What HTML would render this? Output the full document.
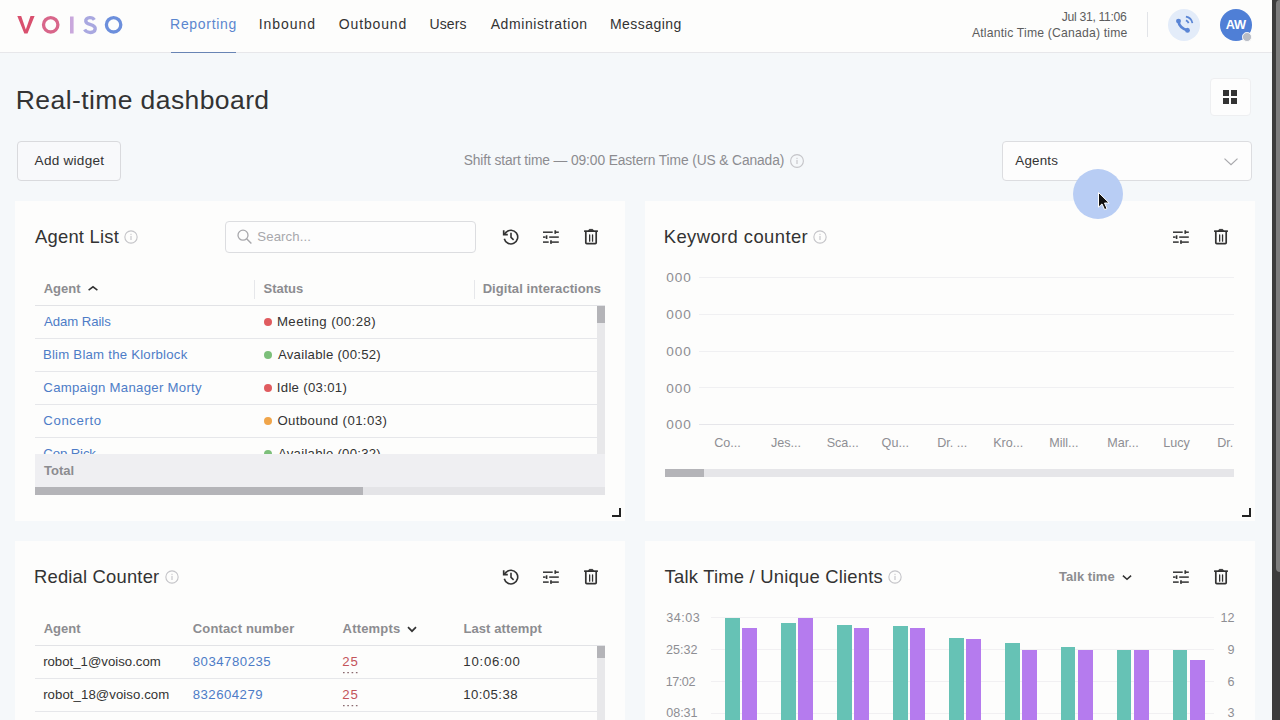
<!DOCTYPE html>
<html><head><meta charset="utf-8">
<style>
*{margin:0;padding:0;box-sizing:border-box}
html,body{width:1280px;height:720px;overflow:hidden}
body{background:#f5f8fa;font-family:"Liberation Sans",sans-serif;color:#333;position:relative}
.t{position:absolute;white-space:nowrap}
svg{position:absolute;overflow:visible}
</style></head><body>
<div class="t" style="left:0px;top:0px;width:1272px;height:52px;background:#fdfdfc;"></div>
<div class="t" style="left:0px;top:52px;width:1272px;height:1px;background:#e7e7ea;"></div>
<svg style="left:17px;top:16px" width="106" height="18" viewBox="0 0 106 18">
  <path d="M0.3 0 H4.2 L8.8 13.4 L13.5 0 H17.6 L10.5 17.5 H7.3 Z" fill="#d9506e"/>
  <circle cx="33.7" cy="8.8" r="7.2" fill="none" stroke="#d8668a" stroke-width="3.3"/>
  <rect x="53" y="0.5" width="3.6" height="17" fill="#c9a8dc"/>
  <path d="M77.3 3.8 C76.3 2.1 74.5 1.5 72.6 1.6 C70.2 1.8 68.5 3.3 68.8 5.3 C69.1 7.5 71.6 8 73.6 8.6 C76.1 9.3 78.4 10.4 78.2 13 C78 15.5 75.2 16.6 72.6 16.4 C70.4 16.2 68.6 15.2 67.6 13.5" fill="none" stroke="#a9a8e0" stroke-width="3.4"/>
  <circle cx="96.6" cy="8.8" r="7.2" fill="none" stroke="#6c8fdc" stroke-width="3.3"/>
</svg>
<div class="t" style="left:170.10px;top:17.00px;font-size:14px;line-height:14px;color:#5b86cf;letter-spacing:0.686px;">Reporting</div>
<div class="t" style="left:171px;top:52px;width:65px;height:1px;background:#6884b4;"></div>
<div class="t" style="left:258.71px;top:17.00px;font-size:14px;line-height:14px;color:#333;letter-spacing:0.946px;">Inbound</div>
<div class="t" style="left:338.74px;top:17.00px;font-size:14px;line-height:14px;color:#333;letter-spacing:0.867px;">Outbound</div>
<div class="t" style="left:429.52px;top:17.00px;font-size:14px;line-height:14px;color:#333;letter-spacing:0.107px;">Users</div>
<div class="t" style="left:490.67px;top:17.00px;font-size:14px;line-height:14px;color:#333;letter-spacing:0.595px;">Administration</div>
<div class="t" style="left:609.95px;top:17.00px;font-size:14px;line-height:14px;color:#333;letter-spacing:0.455px;">Messaging</div>
<div class="t" style="left:1061.80px;top:11.00px;font-size:12.2px;line-height:12.2px;color:#5c5c5c;letter-spacing:-0.319px;">Jul 31, 11:06</div>
<div class="t" style="left:971.98px;top:27.00px;font-size:12.2px;line-height:12.2px;color:#5c5c5c;letter-spacing:0.194px;">Atlantic Time (Canada) time</div>
<div class="t" style="left:1147px;top:12px;width:1px;height:25px;background:#e2e4e8;"></div>
<div class="t" style="left:1168px;top:8.5px;width:32px;height:32px;border-radius:50%;background:#e3ecf9"></div>
<svg style="left:1168px;top:8px" width="32" height="32" viewBox="0 0 32 32">
  <path d="M10.4 13.2 Q11.2 19.8 19.4 22.4" fill="none" stroke="#5a85d5" stroke-width="2.7"/>
  <ellipse cx="10.5" cy="13.1" rx="2.5" ry="2.3" fill="#5a85d5"/>
  <ellipse cx="19.5" cy="22.2" rx="2.4" ry="2.5" fill="#5a85d5"/>
  <path d="M17.9 8.6 A8 8 0 0 1 24.4 15.1" fill="none" stroke="#5a85d5" stroke-width="1.7"/>
  <path d="M17.9 12.4 A4.5 4.5 0 0 1 20.6 15.1" fill="none" stroke="#5a85d5" stroke-width="1.7"/>
</svg>
<div class="t" style="left:1220px;top:8.5px;width:32px;height:32px;border-radius:50%;background:#4f7fd6"></div>
<div class="t" style="left:1225.68px;top:19.00px;font-size:12.8px;line-height:12.8px;color:#ffffff;letter-spacing:-0.288px;font-weight:bold;">AW</div>
<div class="t" style="left:1242.2px;top:32.2px;width:9.6px;height:9.6px;border-radius:50%;background:#b9bdc5;border:1px solid #fdfdfd"></div>
<div class="t" style="left:15.83px;top:87.00px;font-size:26.5px;line-height:26.5px;color:#333;letter-spacing:0.404px;">Real-time dashboard</div>
<div class="t" style="left:1209.5px;top:78px;width:41px;height:38px;background:#fdfdfd;border:1px solid #eeeff1;border-radius:4px"></div>
<div class="t" style="left:1222.7px;top:89.7px;width:6.5px;height:6.5px;background:#333;"></div>
<div class="t" style="left:1230.8px;top:89.7px;width:6.5px;height:6.5px;background:#333;"></div>
<div class="t" style="left:1222.7px;top:97.8px;width:6.5px;height:6.5px;background:#333;"></div>
<div class="t" style="left:1230.8px;top:97.8px;width:6.5px;height:6.5px;background:#333;"></div>
<div class="t" style="left:17px;top:141px;width:104px;height:40px;border:1px solid #d9dadd;border-radius:4px;background:#f8f9fb"></div>
<div class="t" style="left:34.57px;top:154.00px;font-size:13.6px;line-height:13.6px;color:#333;letter-spacing:0.248px;">Add widget</div>
<div class="t" style="left:463.68px;top:154.00px;font-size:13.8px;line-height:13.8px;color:#8c8c90;letter-spacing:-0.121px;">Shift start time — 09:00 Eastern Time (US &amp; Canada)</div>
<svg style="left:788.7px;top:153px" width="16" height="16" viewBox="0 0 16 16"><circle cx="8" cy="8" r="6.4" fill="none" stroke="#c4c4c8" stroke-width="1.1"/><rect x="7.45" y="6.9" width="1.1" height="4.1" fill="#c4c4c8"/><rect x="7.45" y="4.8" width="1.1" height="1.1" fill="#c4c4c8"/></svg>
<div class="t" style="left:1002px;top:141px;width:250px;height:39.5px;border:1px solid #dcdde0;border-radius:4px;background:#fdfdfd"></div>
<div class="t" style="left:1015.27px;top:154.00px;font-size:13.4px;line-height:13.4px;color:#333;letter-spacing:0.179px;">Agents</div>
<svg style="left:1224px;top:157.5px" width="14" height="8" viewBox="0 0 14 8"><path d="M0.5 0.6 L7 6.6 L13.5 0.6" fill="none" stroke="#a8a8ac" stroke-width="1.2"/></svg>
<div class="t" style="left:15px;top:201px;width:610px;height:320px;background:#fdfdfc;"></div>
<div class="t" style="left:645px;top:201px;width:610px;height:320px;background:#fdfdfc;"></div>
<div class="t" style="left:15px;top:541px;width:610px;height:179px;background:#fdfdfc;"></div>
<div class="t" style="left:645px;top:541px;width:610px;height:179px;background:#fdfdfc;"></div>
<div class="t" style="left:611.5px;top:515px;width:9.5px;height:2px;background:#222;"></div>
<div class="t" style="left:619px;top:508px;width:2px;height:9px;background:#222;"></div>
<div class="t" style="left:1241.5px;top:515px;width:9.5px;height:2px;background:#222;"></div>
<div class="t" style="left:1249px;top:508px;width:2px;height:9px;background:#222;"></div>
<div class="t" style="left:35.06px;top:228.00px;font-size:18.4px;line-height:18.4px;color:#333;letter-spacing:0.216px;">Agent List</div>
<svg style="left:122.80000000000001px;top:228.7px" width="16" height="16" viewBox="0 0 16 16"><circle cx="8" cy="8" r="6.15" fill="none" stroke="#c4c4c8" stroke-width="1.1"/><rect x="7.45" y="6.9" width="1.1" height="4.1" fill="#c4c4c8"/><rect x="7.45" y="4.8" width="1.1" height="1.1" fill="#c4c4c8"/></svg>
<div class="t" style="left:225.3px;top:221.2px;width:251px;height:31.6px;border:1px solid #dcdde0;border-radius:4px;background:#fdfdfd"></div>
<svg style="left:235px;top:227px" width="20" height="20" viewBox="0 0 20 20"><circle cx="8" cy="8.2" r="5" fill="none" stroke="#a8a8ac" stroke-width="1.3"/><path d="M11.6 11.8 L16.4 16.6" stroke="#a8a8ac" stroke-width="1.4"/></svg>
<div class="t" style="left:257.31px;top:230.00px;font-size:13.2px;line-height:13.2px;color:#a8a8ac;letter-spacing:0.109px;">Search...</div>
<svg style="left:501px;top:226.8px" width="20" height="20" viewBox="0 0 20 20">
<path d="M3.3 11.7 A6.8 6.8 0 1 0 4.9 5.5" fill="none" stroke="#333" stroke-width="1.6"/>
<path d="M2.7 3.2 V7.6 H6.8" fill="none" stroke="#333" stroke-width="1.7"/>
<path d="M3 7.4 L5.4 5.1" fill="none" stroke="#333" stroke-width="1.6"/>
<path d="M10 5.8 V10.3 L12.6 12.8" fill="none" stroke="#333" stroke-width="1.6"/>
</svg>
<svg style="left:541px;top:226.8px" width="20" height="20" viewBox="0 0 20 20">
<rect x="2" y="4.45" width="9.7" height="1.5" fill="#333"/><rect x="13.4" y="3.3" width="1.7" height="3.5" fill="#333"/><rect x="15" y="4.45" width="2.8" height="1.5" fill="#333"/>
<rect x="2" y="9.35" width="2.6" height="1.5" fill="#333"/><rect x="4.8" y="8.3" width="1.6" height="3.7" fill="#333"/><rect x="8.2" y="9.35" width="9.6" height="1.5" fill="#333"/>
<rect x="2" y="14.35" width="5.7" height="1.5" fill="#333"/><rect x="9.1" y="13.3" width="1.8" height="3.5" fill="#333"/><rect x="10.9" y="14.35" width="6.9" height="1.5" fill="#333"/>
</svg>
<svg style="left:581px;top:226.8px" width="20" height="20" viewBox="0 0 20 20">
<rect x="3.1" y="3.3" width="13.8" height="1.7" fill="#333"/>
<path d="M7.4 3.6 L8.3 2.4 H11.7 L12.6 3.6 Z" fill="#333" stroke="#333" stroke-width="0.9"/>
<path d="M4.8 4.6 V15.8 Q4.8 16.7 5.7 16.7 H14.3 Q15.2 16.7 15.2 15.8 V4.6" fill="none" stroke="#333" stroke-width="1.7"/>
<rect x="8" y="7.3" width="1.3" height="7.5" rx="0.6" fill="#333"/><rect x="10.9" y="7.3" width="1.3" height="7.5" rx="0.6" fill="#333"/>
</svg>
<div class="t" style="left:43.67px;top:282.00px;font-size:13px;line-height:13px;color:#8c8c90;letter-spacing:0.013px;font-weight:bold;">Agent</div>
<svg style="left:86px;top:283px" width="14" height="10" viewBox="0 0 14 10"><path d="M2.6 7.2 L7 3.8 L11.4 7.2" fill="none" stroke="#333" stroke-width="1.5"/></svg>
<div class="t" style="left:254px;top:279.5px;width:1px;height:19px;background:#e6e7ea;"></div>
<div class="t" style="left:263.52px;top:282.00px;font-size:13px;line-height:13px;color:#8c8c90;letter-spacing:-0.024px;font-weight:bold;">Status</div>
<div class="t" style="left:474px;top:279.5px;width:1px;height:19px;background:#e6e7ea;"></div>
<div class="t" style="left:482.63px;top:282.00px;font-size:13px;line-height:13px;color:#8c8c90;letter-spacing:0.073px;font-weight:bold;">Digital interactions</div>
<div class="t" style="left:35px;top:305px;width:570px;height:1px;background:#e2e3e6;"></div>
<div class="t" style="left:35px;top:306px;width:562px;height:148px;overflow:hidden">

<div class="t" style="left:8.97px;top:9.00px;font-size:13.2px;line-height:13.2px;color:#4d7cc7;letter-spacing:-0.066px;">Adam Rails</div>
<div class="t" style="left:229px;top:11.699999999999989px;width:8px;height:8px;border-radius:50%;background:#e05c5f"></div>
<div class="t" style="left:241.92px;top:9.00px;font-size:13.2px;line-height:13.2px;color:#333;letter-spacing:0.461px;">Meeting (00:28)</div>
<div class="t" style="left:0px;top:32px;width:562px;height:1px;background:#e6e7ea;"></div>

<div class="t" style="left:7.92px;top:42.00px;font-size:13.2px;line-height:13.2px;color:#4d7cc7;letter-spacing:0.231px;">Blim Blam the Klorblock</div>
<div class="t" style="left:229px;top:44.69999999999999px;width:8px;height:8px;border-radius:50%;background:#7cbf7a"></div>
<div class="t" style="left:242.97px;top:42.00px;font-size:13.2px;line-height:13.2px;color:#333;letter-spacing:0.252px;">Available (00:52)</div>
<div class="t" style="left:0px;top:65px;width:562px;height:1px;background:#e6e7ea;"></div>

<div class="t" style="left:8.33px;top:75.00px;font-size:13.2px;line-height:13.2px;color:#4d7cc7;letter-spacing:0.276px;">Campaign Manager Morty</div>
<div class="t" style="left:229px;top:77.69999999999999px;width:8px;height:8px;border-radius:50%;background:#e05c5f"></div>
<div class="t" style="left:241.79px;top:75.00px;font-size:13.2px;line-height:13.2px;color:#333;letter-spacing:0.305px;">Idle (03:01)</div>
<div class="t" style="left:0px;top:98px;width:562px;height:1px;background:#e6e7ea;"></div>

<div class="t" style="left:8.33px;top:108.00px;font-size:13.2px;line-height:13.2px;color:#4d7cc7;letter-spacing:0.596px;">Concerto</div>
<div class="t" style="left:229px;top:110.69999999999999px;width:8px;height:8px;border-radius:50%;background:#f0a54a"></div>
<div class="t" style="left:242.38px;top:108.00px;font-size:13.2px;line-height:13.2px;color:#333;letter-spacing:0.404px;">Outbound (01:03)</div>
<div class="t" style="left:0px;top:131px;width:562px;height:1px;background:#e6e7ea;"></div>

<div class="t" style="left:8.33px;top:141.00px;font-size:13.2px;line-height:13.2px;color:#4d7cc7;letter-spacing:-0.127px;">Cop Rick</div>
<div class="t" style="left:229px;top:143.7px;width:8px;height:8px;border-radius:50%;background:#7cbf7a"></div>
<div class="t" style="left:242.97px;top:141.00px;font-size:13.2px;line-height:13.2px;color:#333;letter-spacing:0.252px;">Available (00:32)</div>
</div>
<div class="t" style="left:597px;top:306px;width:8px;height:148.5px;background:#e8e8ea;"></div>
<div class="t" style="left:597px;top:306px;width:8px;height:17px;background:#b4b4b8;"></div>
<div class="t" style="left:35px;top:454px;width:570px;height:33px;background:#efeff2;"></div>
<div class="t" style="left:43.96px;top:464.00px;font-size:13px;line-height:13px;color:#8c8c90;letter-spacing:0.018px;font-weight:bold;">Total</div>
<div class="t" style="left:35px;top:487px;width:570px;height:8px;background:#e4e4e7;"></div>
<div class="t" style="left:35px;top:487px;width:328px;height:8px;background:#b4b4b8;"></div>
<div class="t" style="left:663.69px;top:228.00px;font-size:18.4px;line-height:18.4px;color:#333;letter-spacing:0.431px;">Keyword counter</div>
<svg style="left:811.8px;top:228.7px" width="16" height="16" viewBox="0 0 16 16"><circle cx="8" cy="8" r="6.15" fill="none" stroke="#c4c4c8" stroke-width="1.1"/><rect x="7.45" y="6.9" width="1.1" height="4.1" fill="#c4c4c8"/><rect x="7.45" y="4.8" width="1.1" height="1.1" fill="#c4c4c8"/></svg>
<svg style="left:1171px;top:226.8px" width="20" height="20" viewBox="0 0 20 20">
<rect x="2" y="4.45" width="9.7" height="1.5" fill="#333"/><rect x="13.4" y="3.3" width="1.7" height="3.5" fill="#333"/><rect x="15" y="4.45" width="2.8" height="1.5" fill="#333"/>
<rect x="2" y="9.35" width="2.6" height="1.5" fill="#333"/><rect x="4.8" y="8.3" width="1.6" height="3.7" fill="#333"/><rect x="8.2" y="9.35" width="9.6" height="1.5" fill="#333"/>
<rect x="2" y="14.35" width="5.7" height="1.5" fill="#333"/><rect x="9.1" y="13.3" width="1.8" height="3.5" fill="#333"/><rect x="10.9" y="14.35" width="6.9" height="1.5" fill="#333"/>
</svg>
<svg style="left:1211px;top:226.8px" width="20" height="20" viewBox="0 0 20 20">
<rect x="3.1" y="3.3" width="13.8" height="1.7" fill="#333"/>
<path d="M7.4 3.6 L8.3 2.4 H11.7 L12.6 3.6 Z" fill="#333" stroke="#333" stroke-width="0.9"/>
<path d="M4.8 4.6 V15.8 Q4.8 16.7 5.7 16.7 H14.3 Q15.2 16.7 15.2 15.8 V4.6" fill="none" stroke="#333" stroke-width="1.7"/>
<rect x="8" y="7.3" width="1.3" height="7.5" rx="0.6" fill="#333"/><rect x="10.9" y="7.3" width="1.3" height="7.5" rx="0.6" fill="#333"/>
</svg>
<div class="t" style="left:699px;top:277.1px;width:535px;height:1px;background:#f0f0f2;"></div>
<div class="t" style="left:666.17px;top:271.00px;font-size:13.6px;line-height:13.6px;color:#8e8e93;letter-spacing:1.038px;">000</div>
<div class="t" style="left:699px;top:313.9px;width:535px;height:1px;background:#f0f0f2;"></div>
<div class="t" style="left:666.17px;top:308.00px;font-size:13.6px;line-height:13.6px;color:#8e8e93;letter-spacing:1.038px;">000</div>
<div class="t" style="left:699px;top:350.6px;width:535px;height:1px;background:#f0f0f2;"></div>
<div class="t" style="left:666.17px;top:345.00px;font-size:13.6px;line-height:13.6px;color:#8e8e93;letter-spacing:1.038px;">000</div>
<div class="t" style="left:699px;top:387.3px;width:535px;height:1px;background:#f0f0f2;"></div>
<div class="t" style="left:666.17px;top:382.00px;font-size:13.6px;line-height:13.6px;color:#8e8e93;letter-spacing:1.038px;">000</div>
<div class="t" style="left:699px;top:424.0px;width:535px;height:1px;background:#e6e6ea;"></div>
<div class="t" style="left:666.17px;top:418.00px;font-size:13.6px;line-height:13.6px;color:#8e8e93;letter-spacing:1.038px;">000</div>
<div class="t" style="left:714.16px;top:437.00px;font-size:12.6px;line-height:12.6px;color:#8e8e93;letter-spacing:0.000px;">Co...</div>
<div class="t" style="left:771.00px;top:437.00px;font-size:12.6px;line-height:12.6px;color:#8e8e93;letter-spacing:0.000px;">Jes...</div>
<div class="t" style="left:826.63px;top:437.00px;font-size:12.6px;line-height:12.6px;color:#8e8e93;letter-spacing:0.000px;">Sca...</div>
<div class="t" style="left:881.61px;top:437.00px;font-size:12.6px;line-height:12.6px;color:#8e8e93;letter-spacing:0.000px;">Qu...</div>
<div class="t" style="left:937.17px;top:437.00px;font-size:12.6px;line-height:12.6px;color:#8e8e93;letter-spacing:0.000px;">Dr. ...</div>
<div class="t" style="left:993.17px;top:437.00px;font-size:12.6px;line-height:12.6px;color:#8e8e93;letter-spacing:0.000px;">Kro...</div>
<div class="t" style="left:1049.17px;top:437.00px;font-size:12.6px;line-height:12.6px;color:#8e8e93;letter-spacing:0.000px;">Mill...</div>
<div class="t" style="left:1107.17px;top:437.00px;font-size:12.6px;line-height:12.6px;color:#8e8e93;letter-spacing:0.000px;">Mar...</div>
<div class="t" style="left:1163.17px;top:437.00px;font-size:12.6px;line-height:12.6px;color:#8e8e93;letter-spacing:0.000px;">Lucy</div>
<div class="t" style="left:1217.17px;top:437.00px;font-size:12.6px;line-height:12.6px;color:#8e8e93;letter-spacing:0.000px;">Dr.</div>
<div class="t" style="left:665px;top:469px;width:569px;height:8px;background:#e6e6e9;"></div>
<div class="t" style="left:665px;top:469px;width:39px;height:8px;background:#b4b4b8;"></div>
<div class="t" style="left:33.99px;top:568.00px;font-size:18.4px;line-height:18.4px;color:#333;letter-spacing:0.198px;">Redial Counter</div>
<svg style="left:164px;top:569.2px" width="16" height="16" viewBox="0 0 16 16"><circle cx="8" cy="8" r="6.15" fill="none" stroke="#c4c4c8" stroke-width="1.1"/><rect x="7.45" y="6.9" width="1.1" height="4.1" fill="#c4c4c8"/><rect x="7.45" y="4.8" width="1.1" height="1.1" fill="#c4c4c8"/></svg>
<svg style="left:501px;top:566.8px" width="20" height="20" viewBox="0 0 20 20">
<path d="M3.3 11.7 A6.8 6.8 0 1 0 4.9 5.5" fill="none" stroke="#333" stroke-width="1.6"/>
<path d="M2.7 3.2 V7.6 H6.8" fill="none" stroke="#333" stroke-width="1.7"/>
<path d="M3 7.4 L5.4 5.1" fill="none" stroke="#333" stroke-width="1.6"/>
<path d="M10 5.8 V10.3 L12.6 12.8" fill="none" stroke="#333" stroke-width="1.6"/>
</svg>
<svg style="left:541px;top:566.8px" width="20" height="20" viewBox="0 0 20 20">
<rect x="2" y="4.45" width="9.7" height="1.5" fill="#333"/><rect x="13.4" y="3.3" width="1.7" height="3.5" fill="#333"/><rect x="15" y="4.45" width="2.8" height="1.5" fill="#333"/>
<rect x="2" y="9.35" width="2.6" height="1.5" fill="#333"/><rect x="4.8" y="8.3" width="1.6" height="3.7" fill="#333"/><rect x="8.2" y="9.35" width="9.6" height="1.5" fill="#333"/>
<rect x="2" y="14.35" width="5.7" height="1.5" fill="#333"/><rect x="9.1" y="13.3" width="1.8" height="3.5" fill="#333"/><rect x="10.9" y="14.35" width="6.9" height="1.5" fill="#333"/>
</svg>
<svg style="left:581px;top:566.8px" width="20" height="20" viewBox="0 0 20 20">
<rect x="3.1" y="3.3" width="13.8" height="1.7" fill="#333"/>
<path d="M7.4 3.6 L8.3 2.4 H11.7 L12.6 3.6 Z" fill="#333" stroke="#333" stroke-width="0.9"/>
<path d="M4.8 4.6 V15.8 Q4.8 16.7 5.7 16.7 H14.3 Q15.2 16.7 15.2 15.8 V4.6" fill="none" stroke="#333" stroke-width="1.7"/>
<rect x="8" y="7.3" width="1.3" height="7.5" rx="0.6" fill="#333"/><rect x="10.9" y="7.3" width="1.3" height="7.5" rx="0.6" fill="#333"/>
</svg>
<div class="t" style="left:43.67px;top:622.00px;font-size:13px;line-height:13px;color:#8c8c90;letter-spacing:0.013px;font-weight:bold;">Agent</div>
<div class="t" style="left:192.77px;top:622.00px;font-size:13px;line-height:13px;color:#8c8c90;letter-spacing:0.143px;font-weight:bold;">Contact number</div>
<div class="t" style="left:342.57px;top:622.00px;font-size:13px;line-height:13px;color:#8c8c90;letter-spacing:0.176px;font-weight:bold;">Attempts</div>
<svg style="left:405px;top:624px" width="14" height="10" viewBox="0 0 14 10"><path d="M3 3.2 L7 7.2 L11 3.2" fill="none" stroke="#333" stroke-width="1.7"/></svg>
<div class="t" style="left:463.43px;top:622.00px;font-size:13px;line-height:13px;color:#8c8c90;letter-spacing:0.095px;font-weight:bold;">Last attempt</div>
<div class="t" style="left:35px;top:645px;width:570px;height:1px;background:#e2e3e6;"></div>
<div class="t" style="left:43.13px;top:655.00px;font-size:13.2px;line-height:13.2px;color:#333;letter-spacing:0.010px;">robot_1@voiso.com</div>
<div class="t" style="left:192.73px;top:655.00px;font-size:13.2px;line-height:13.2px;color:#4d7cc7;letter-spacing:0.513px;">8034780235</div>
<div class="t" style="left:342.24px;top:655.00px;font-size:13.2px;line-height:13.2px;color:#c4545a;letter-spacing:1.036px;">25</div>
<svg style="left:342.8px;top:672px" width="15" height="2" viewBox="0 0 15 2"><path d="M0 0.6 H15" stroke="#8a6a6e" stroke-width="1.1" stroke-dasharray="1.6 2.7"/></svg>
<div class="t" style="left:463.30px;top:655.00px;font-size:13.2px;line-height:13.2px;color:#333;letter-spacing:0.749px;">10:06:00</div>
<div class="t" style="left:35px;top:678px;width:562px;height:1px;background:#e6e7ea;"></div>
<div class="t" style="left:43.13px;top:688.00px;font-size:13.2px;line-height:13.2px;color:#333;letter-spacing:0.078px;">robot_18@voiso.com</div>
<div class="t" style="left:192.73px;top:688.00px;font-size:13.2px;line-height:13.2px;color:#4d7cc7;letter-spacing:0.478px;">832604279</div>
<div class="t" style="left:342.24px;top:688.00px;font-size:13.2px;line-height:13.2px;color:#c4545a;letter-spacing:1.036px;">25</div>
<svg style="left:342.8px;top:705px" width="15" height="2" viewBox="0 0 15 2"><path d="M0 0.6 H15" stroke="#8a6a6e" stroke-width="1.1" stroke-dasharray="1.6 2.7"/></svg>
<div class="t" style="left:463.30px;top:688.00px;font-size:13.2px;line-height:13.2px;color:#333;letter-spacing:0.414px;">10:05:38</div>
<div class="t" style="left:35px;top:711px;width:562px;height:1px;background:#e6e7ea;"></div>
<div class="t" style="left:597px;top:645.5px;width:8px;height:80px;background:#e8e8ea;"></div>
<div class="t" style="left:597px;top:645.5px;width:8px;height:12px;background:#b4b4b8;"></div>
<div class="t" style="left:664.60px;top:568.00px;font-size:18.4px;line-height:18.4px;color:#333;letter-spacing:0.223px;">Talk Time / Unique Clients</div>
<svg style="left:886.6px;top:569.2px" width="16" height="16" viewBox="0 0 16 16"><circle cx="8" cy="8" r="6.15" fill="none" stroke="#c4c4c8" stroke-width="1.1"/><rect x="7.45" y="6.9" width="1.1" height="4.1" fill="#c4c4c8"/><rect x="7.45" y="4.8" width="1.1" height="1.1" fill="#c4c4c8"/></svg>
<div class="t" style="left:1059.06px;top:570.00px;font-size:13px;line-height:13px;color:#8c8c90;letter-spacing:0.024px;font-weight:bold;">Talk time</div>
<svg style="left:1120px;top:571px" width="14" height="10" viewBox="0 0 14 10"><path d="M2.9 4.6 L7 8.2 L11.1 4.6" fill="none" stroke="#333" stroke-width="1.5"/></svg>
<svg style="left:1171px;top:566.8px" width="20" height="20" viewBox="0 0 20 20">
<rect x="2" y="4.45" width="9.7" height="1.5" fill="#333"/><rect x="13.4" y="3.3" width="1.7" height="3.5" fill="#333"/><rect x="15" y="4.45" width="2.8" height="1.5" fill="#333"/>
<rect x="2" y="9.35" width="2.6" height="1.5" fill="#333"/><rect x="4.8" y="8.3" width="1.6" height="3.7" fill="#333"/><rect x="8.2" y="9.35" width="9.6" height="1.5" fill="#333"/>
<rect x="2" y="14.35" width="5.7" height="1.5" fill="#333"/><rect x="9.1" y="13.3" width="1.8" height="3.5" fill="#333"/><rect x="10.9" y="14.35" width="6.9" height="1.5" fill="#333"/>
</svg>
<svg style="left:1211px;top:566.8px" width="20" height="20" viewBox="0 0 20 20">
<rect x="3.1" y="3.3" width="13.8" height="1.7" fill="#333"/>
<path d="M7.4 3.6 L8.3 2.4 H11.7 L12.6 3.6 Z" fill="#333" stroke="#333" stroke-width="0.9"/>
<path d="M4.8 4.6 V15.8 Q4.8 16.7 5.7 16.7 H14.3 Q15.2 16.7 15.2 15.8 V4.6" fill="none" stroke="#333" stroke-width="1.7"/>
<rect x="8" y="7.3" width="1.3" height="7.5" rx="0.6" fill="#333"/><rect x="10.9" y="7.3" width="1.3" height="7.5" rx="0.6" fill="#333"/>
</svg>
<div class="t" style="left:711px;top:617.3px;width:503px;height:1px;background:#f1f0f2;"></div>
<div class="t" style="left:666.22px;top:612.00px;font-size:12.6px;line-height:12.6px;color:#8e8e93;letter-spacing:0.477px;">34:03</div>
<div class="t" style="left:1220.62px;top:612.00px;font-size:12.6px;line-height:12.6px;color:#8e8e93;letter-spacing:0.000px;">12</div>
<div class="t" style="left:711px;top:649.1px;width:503px;height:1px;background:#f1f0f2;"></div>
<div class="t" style="left:666.07px;top:644.00px;font-size:12.6px;line-height:12.6px;color:#8e8e93;letter-spacing:0.009px;">25:32</div>
<div class="t" style="left:1227.59px;top:644.00px;font-size:12.6px;line-height:12.6px;color:#8e8e93;letter-spacing:0.000px;">9</div>
<div class="t" style="left:711px;top:681.0px;width:503px;height:1px;background:#f1f0f2;"></div>
<div class="t" style="left:665.74px;top:676.00px;font-size:12.6px;line-height:12.6px;color:#8e8e93;letter-spacing:-0.459px;">17:02</div>
<div class="t" style="left:1227.55px;top:676.00px;font-size:12.6px;line-height:12.6px;color:#8e8e93;letter-spacing:0.000px;">6</div>
<div class="t" style="left:711px;top:712.9px;width:503px;height:1px;background:#f1f0f2;"></div>
<div class="t" style="left:666.21px;top:707.00px;font-size:12.6px;line-height:12.6px;color:#8e8e93;letter-spacing:-0.029px;">08:31</div>
<div class="t" style="left:1227.55px;top:707.00px;font-size:12.6px;line-height:12.6px;color:#8e8e93;letter-spacing:0.000px;">3</div>
<div class="t" style="left:725.2px;top:617.9px;width:14.6px;height:102.10000000000002px;background:#66c2b5;"></div>
<div class="t" style="left:742.0px;top:628.4px;width:15px;height:91.60000000000002px;background:#b57bee;"></div>
<div class="t" style="left:781.2px;top:622.9px;width:14.6px;height:97.10000000000002px;background:#66c2b5;"></div>
<div class="t" style="left:798.0px;top:617.9px;width:15px;height:102.10000000000002px;background:#b57bee;"></div>
<div class="t" style="left:837.1px;top:625px;width:14.6px;height:95px;background:#66c2b5;"></div>
<div class="t" style="left:853.9px;top:628.4px;width:15px;height:91.60000000000002px;background:#b57bee;"></div>
<div class="t" style="left:893.1px;top:625.8px;width:14.6px;height:94.20000000000005px;background:#66c2b5;"></div>
<div class="t" style="left:909.9px;top:628.4px;width:15px;height:91.60000000000002px;background:#b57bee;"></div>
<div class="t" style="left:949.0px;top:637.7px;width:14.6px;height:82.29999999999995px;background:#66c2b5;"></div>
<div class="t" style="left:965.8px;top:639px;width:15px;height:81px;background:#b57bee;"></div>
<div class="t" style="left:1005.0px;top:643px;width:14.6px;height:77px;background:#66c2b5;"></div>
<div class="t" style="left:1021.8px;top:649.5px;width:15px;height:70.5px;background:#b57bee;"></div>
<div class="t" style="left:1060.9px;top:646.9px;width:14.6px;height:73.10000000000002px;background:#66c2b5;"></div>
<div class="t" style="left:1077.7px;top:649.5px;width:15px;height:70.5px;background:#b57bee;"></div>
<div class="t" style="left:1116.9px;top:649.5px;width:14.6px;height:70.5px;background:#66c2b5;"></div>
<div class="t" style="left:1133.7px;top:649.5px;width:15px;height:70.5px;background:#b57bee;"></div>
<div class="t" style="left:1172.8px;top:649.5px;width:14.6px;height:70.5px;background:#66c2b5;"></div>
<div class="t" style="left:1189.6px;top:660px;width:15px;height:60px;background:#b57bee;"></div>
<div class="t" style="left:1073px;top:169px;width:50px;height:50px;border-radius:50%;background:#b8cdf4"></div>
<svg style="left:1097.6px;top:192.3px" width="14" height="20" viewBox="0 0 14 20"><path d="M0.5 0.5 L0.5 15.2 L4 11.9 L6.6 17.6 L9 16.6 L6.5 11 L11.2 11 Z" fill="#111" stroke="#fff" stroke-width="1" stroke-linejoin="round"/></svg>
<div class="t" style="left:1272px;top:0px;width:8px;height:720px;background:#3c3c3c;"></div>
<div class="t" style="left:1276px;top:0px;width:8px;height:572px;border-radius:4px;background:#7d7d7d"></div>
</body></html>
